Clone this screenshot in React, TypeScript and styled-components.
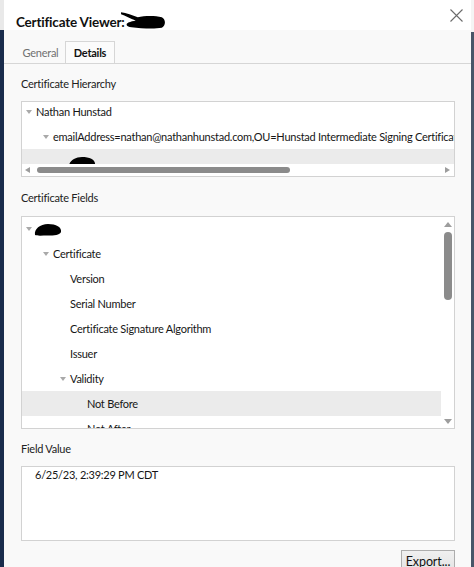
import styled, { createGlobalStyle } from 'styled-components';

type TreeItem = {
  level: number;
  label?: string;
  redacted?: boolean;
  expanded?: boolean;
  selected?: boolean;
};

const hierarchy: TreeItem[] = [
  { level: 0, label: 'Nathan Hunstad', expanded: true },
  {
    level: 1,
    label:
      'emailAddress=nathan@nathanhunstad.com,OU=Hunstad Intermediate Signing Certificate Authority,O=Hunstad,C=US',
    expanded: true,
  },
  { level: 2, redacted: true, selected: true },
];

const fields: TreeItem[] = [
  { level: 0, redacted: true, expanded: true },
  { level: 1, label: 'Certificate', expanded: true },
  { level: 2, label: 'Version' },
  { level: 2, label: 'Serial Number' },
  { level: 2, label: 'Certificate Signature Algorithm' },
  { level: 2, label: 'Issuer' },
  { level: 2, label: 'Validity', expanded: true },
  { level: 3, label: 'Not Before', selected: true },
  { level: 3, label: 'Not After' },
];

const Blob = ({ width, height }: { width: number; height: number }) => (
  <svg width={width} height={height} viewBox="0 0 28 13" preserveAspectRatio="none">
    <path d="M1 12 C0 6 6 1 14 1 C22 1 28 4 27 9 C26 12 20 12.5 14 12.5 C8 12.5 3 13 1 12 Z" fill="#000" />
  </svg>
);

const TitleScribble = () => (
  <svg width="46" height="19" viewBox="0 0 44 18">
    <path
      d="M1 1 C6 1.5 12 4 17 6 C23 4.5 33 4 40 6 C44 8 44 14 40 16 C32 17.5 20 16.5 11 15.5 C6 15 5 12.5 8 11 C10 10 13 9.5 15 9 C10 7 5 4.5 1 3 Z"
      fill="#000"
    />
  </svg>
);

const CloseIcon = () => (
  <svg width="13" height="13" viewBox="0 0 13 13">
    <path d="M0.5 0.5 L12.5 12.5 M12.5 0.5 L0.5 12.5" stroke="#6b6b6b" strokeWidth="1.1" />
  </svg>
);

const TreeRows = ({ items }: { items: TreeItem[] }) => (
  <>
    {items.map((item, i) => (
      <S.Row key={i} $level={item.level} $selected={!!item.selected}>
        <S.Twisty>{item.expanded && <S.Caret />}</S.Twisty>
        {item.redacted ? (
          <S.RedactWrap>
            <Blob width={28} height={13} />
          </S.RedactWrap>
        ) : (
          <S.RowText>{item.label}</S.RowText>
        )}
      </S.Row>
    ))}
  </>
);

const App = () => {
  return (
    <>
      <GlobalStyle />
      <S.Page>
        <S.Edge $side="left" />
        <S.Dialog>
          <S.Header>
            <S.Title>
              Certificate Viewer:
              <S.TitleRedact>
                <TitleScribble />
              </S.TitleRedact>
            </S.Title>
            <S.CloseButton aria-label="Close">
              <CloseIcon />
            </S.CloseButton>
          </S.Header>

          <S.TabStrip>
            <S.Tab $active={false}>General</S.Tab>
            <S.Tab $active>Details</S.Tab>
          </S.TabStrip>

          <S.Body>
            <S.Label $top={12}>Certificate Hierarchy</S.Label>
            <S.Box $height={76}>
              <S.Viewport>
                <S.Tree $offset={3}>
                  <TreeRows items={hierarchy} />
                </S.Tree>
              </S.Viewport>
              <S.HScroll>
                <S.ArrowSlot $width={11}>
                  <S.Arrow $dir="left" />
                </S.ArrowSlot>
                <S.HThumb />
                <S.ArrowSlot $width={13} $push>
                  <S.Arrow $dir="right" />
                </S.ArrowSlot>
              </S.HScroll>
            </S.Box>

            <S.Label $top={13}>Certificate Fields</S.Label>
            <S.Box $height={213} $row>
              <S.Viewport>
                <S.Tree $offset={1}>
                  <TreeRows items={fields} />
                </S.Tree>
              </S.Viewport>
              <S.VScroll>
                <S.VArrowSlot>
                  <S.Arrow $dir="up" />
                </S.VArrowSlot>
                <S.VThumb />
                <S.VArrowSlot $push>
                  <S.Arrow $dir="down" />
                </S.VArrowSlot>
              </S.VScroll>
            </S.Box>

            <S.Label $top={12}>Field Value</S.Label>
            <S.ValueBox>6/25/23, 2:39:29 PM CDT</S.ValueBox>

            <S.Footer>
              <S.Button>Export...</S.Button>
            </S.Footer>
          </S.Body>
        </S.Dialog>
        <S.Edge $side="right" />
      </S.Page>
    </>
  );
};

const GlobalStyle = createGlobalStyle`
  html, body {
    margin: 0;
    height: 100%;
    overflow: hidden;
  }
  body {
    font-family: Lato, "Liberation Sans", sans-serif;
    font-size: 11px;
    letter-spacing: -0.25px;
    color: #161616;
  }
  * {
    box-sizing: border-box;
  }
`;

const S = {
  Page: styled.div`
    display: flex;
    align-items: flex-start;
    height: 567px;
    overflow: hidden;
  `,

  Edge: styled.div<{ $side: 'left' | 'right' }>`
    align-self: stretch;
    width: ${(p) => (p.$side === 'left' ? 4 : 3)}px;
    flex-shrink: 0;
    background: ${(p) =>
      p.$side === 'left'
        ? 'linear-gradient(to bottom, #e9e9e9 0 30px, #1a2c4c 30px)'
        : 'linear-gradient(to bottom, #f4f4f4 0 32px, #485668 32px)'};
  `,

  Dialog: styled.div`
    flex: none;
    width: 467px;
    min-width: 0;
    min-height: 600px;
    background: #f9f9f9;
  `,

  Header: styled.div`
    display: flex;
    justify-content: space-between;
    align-items: flex-start;
    height: 30px;
    padding-left: 12px;
    background: #ffffff;
  `,

  Title: styled.div`
    display: flex;
    align-items: flex-start;
    padding-top: 13px;
    font-size: 13.5px;
    line-height: 18px;
    letter-spacing: -0.2px;
    font-weight: 700;
    color: #111;
  `,

  TitleRedact: styled.span`
    display: block;
    margin-top: -2px;
    margin-left: -5px;
  `,

  CloseButton: styled.button`
    display: flex;
    margin: 9px 8px 0 0;
    padding: 0;
    border: none;
    background: transparent;
  `,

  TabStrip: styled.div`
    display: flex;
    align-items: flex-end;
    height: 34px;
    padding-left: 12px;
    border-bottom: 1px solid #d6d6d6;
  `,

  Tab: styled.div<{ $active: boolean }>`
    width: ${(p) => (p.$active ? 50 : 49)}px;
    height: 22px;
    line-height: 21px;
    text-align: center;
    color: ${(p) => (p.$active ? '#111' : '#707070')};
    font-weight: ${(p) => (p.$active ? 700 : 400)};
    background: ${(p) => (p.$active ? '#fbfbfb' : 'transparent')};
    border: 1px solid ${(p) => (p.$active ? '#d6d6d6' : 'transparent')};
    border-bottom: none;
  `,

  Body: styled.div`
    display: flex;
    flex-direction: column;
    padding: 0 16px 0 17px;
  `,

  Label: styled.div<{ $top: number }>`
    padding-top: ${(p) => p.$top}px;
    margin-bottom: ${(p) => (p.$top === 13 ? 10 : 9)}px;
    line-height: 16px;
    color: #222;
  `,

  Box: styled.div<{ $height: number; $row?: boolean }>`
    display: flex;
    flex-direction: ${(p) => (p.$row ? 'row' : 'column')};
    height: ${(p) => p.$height}px;
    min-width: 0;
    border: 1px solid #d2d2d2;
    background: #ffffff;
    overflow: hidden;
  `,

  Viewport: styled.div`
    flex: 1;
    min-width: 0;
    min-height: 0;
    overflow: hidden;
  `,

  Tree: styled.div<{ $offset: number }>`
    margin-top: ${(p) => -p.$offset}px;
  `,

  Row: styled.div<{ $level: number; $selected: boolean }>`
    display: flex;
    align-items: center;
    height: 25px;
    padding-left: ${(p) => 4 + p.$level * 17}px;
    background: ${(p) => (p.$selected ? '#ebebeb' : 'transparent')};
    white-space: nowrap;
  `,

  Twisty: styled.span`
    display: flex;
    align-items: center;
    width: 10px;
    flex-shrink: 0;
  `,

  Caret: styled.span`
    width: 0;
    height: 0;
    border-left: 3.5px solid transparent;
    border-right: 3.5px solid transparent;
    border-top: 4px solid #a9a9a9;
  `,

  RowText: styled.span`
    color: #161616;
  `,

  RedactWrap: styled.span`
    display: flex;
    margin-left: -2px;
    margin-top: 1px;
  `,

  HScroll: styled.div`
    display: flex;
    align-items: center;
    height: 12px;
    flex-shrink: 0;
    background: #ffffff;
  `,

  ArrowSlot: styled.div<{ $width: number; $push?: boolean }>`
    display: flex;
    align-items: center;
    justify-content: center;
    width: ${(p) => p.$width}px;
    height: 100%;
    margin-left: ${(p) => (p.$push ? 'auto' : '0')};
  `,

  Arrow: styled.span<{ $dir: 'left' | 'right' | 'up' | 'down' }>`
    width: 0;
    height: 0;
    ${(p) =>
      p.$dir === 'left'
        ? 'border-top: 3.5px solid transparent; border-bottom: 3.5px solid transparent; border-right: 5px solid #9d9d9d;'
        : p.$dir === 'right'
          ? 'border-top: 3.5px solid transparent; border-bottom: 3.5px solid transparent; border-left: 5px solid #9d9d9d;'
          : p.$dir === 'up'
            ? 'border-left: 4px solid transparent; border-right: 4px solid transparent; border-bottom: 5px solid #9d9d9d;'
            : 'border-left: 4px solid transparent; border-right: 4px solid transparent; border-top: 5px solid #9d9d9d;'}
  `,

  HThumb: styled.div`
    width: 253px;
    height: 6px;
    margin-left: 4px;
    border-radius: 3px;
    background: #8b8b8b;
  `,

  VScroll: styled.div`
    display: flex;
    flex-direction: column;
    align-items: center;
    width: 13px;
    flex-shrink: 0;
  `,

  VArrowSlot: styled.div<{ $push?: boolean }>`
    display: flex;
    align-items: center;
    justify-content: center;
    height: 14px;
    width: 100%;
    margin-top: ${(p) => (p.$push ? 'auto' : '0')};
  `,

  VThumb: styled.div`
    width: 8px;
    height: 68px;
    margin-top: 1px;
    border-radius: 4px;
    background: #8b8b8b;
  `,

  ValueBox: styled.div`
    height: 75px;
    padding: 0 13px;
    border: 1px solid #d2d2d2;
    background: #ffffff;
    line-height: 16px;
    color: #161616;
  `,

  Footer: styled.div`
    display: flex;
    justify-content: flex-end;
    padding-top: 9px;
  `,

  Button: styled.button`
    width: 54px;
    height: 23px;
    padding: 0;
    font-family: inherit;
    font-size: 12.5px;
    letter-spacing: -0.1px;
    color: #111;
    border: 1px solid #adadad;
    background: linear-gradient(to bottom, #f0f0f0, #e3e3e3);
  `,
};

export default App;
